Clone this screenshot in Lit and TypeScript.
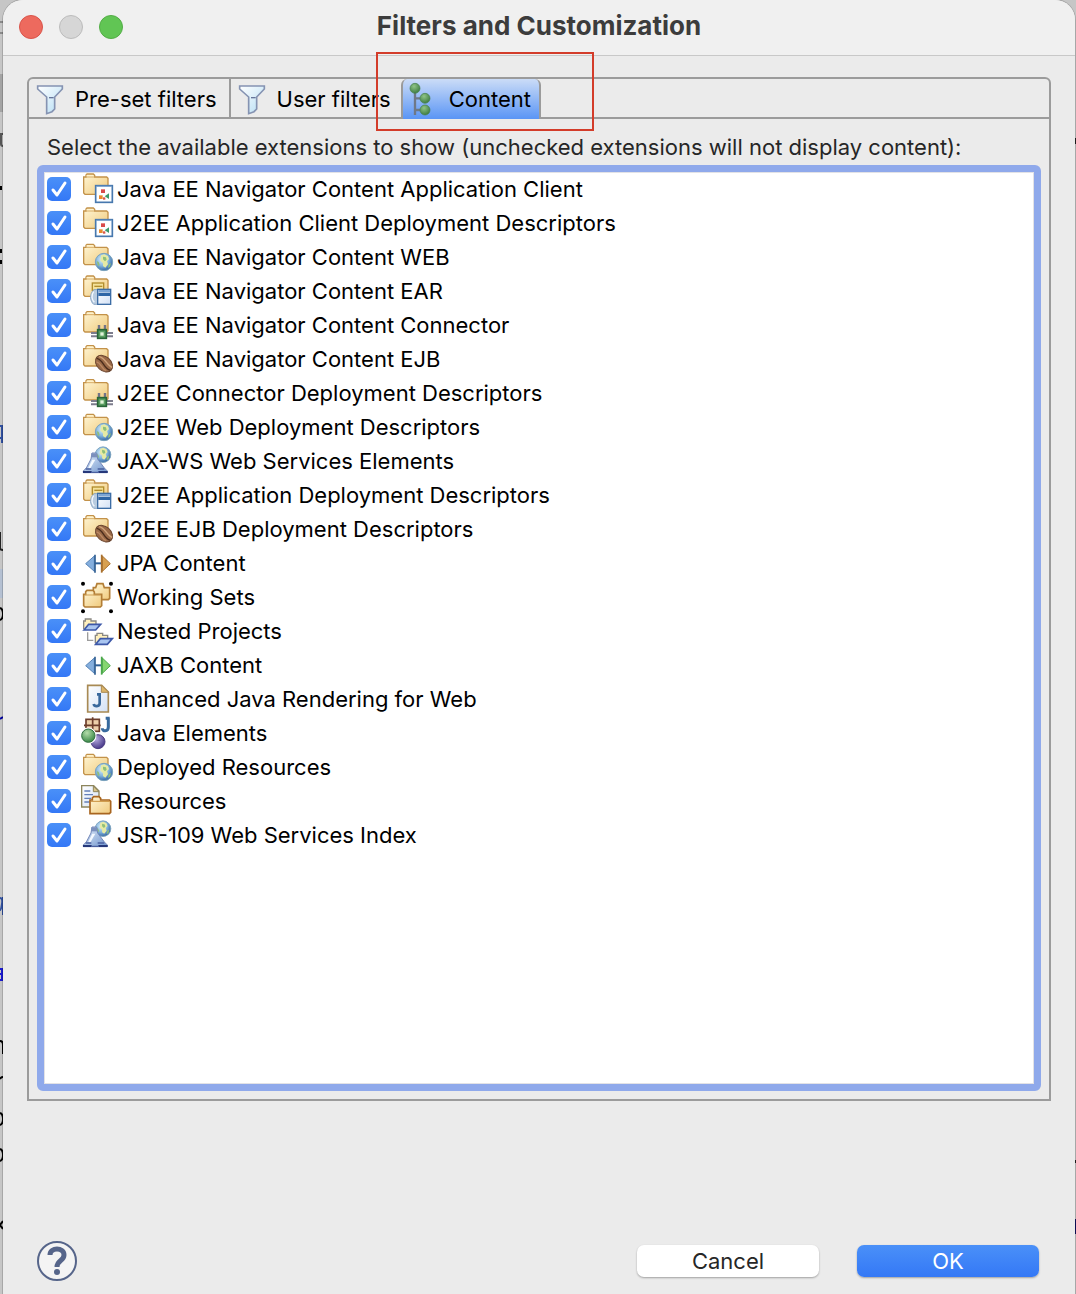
import { LitElement, html, svg, css, TemplateResult } from "lit";
import { customElement, state } from "lit/decorators.js";

type IconName =
  | "client" | "web" | "ear" | "connector" | "ejb" | "service" | "jpa"
  | "sets" | "nested" | "jaxb" | "javafile" | "javaelements" | "resources";

interface Extension {
  name: string;
  icon: IconName;
}

const EXTENSIONS: Extension[] = [
  { name: "Java EE Navigator Content Application Client", icon: "client" },
  { name: "J2EE Application Client Deployment Descriptors", icon: "client" },
  { name: "Java EE Navigator Content WEB", icon: "web" },
  { name: "Java EE Navigator Content EAR", icon: "ear" },
  { name: "Java EE Navigator Content Connector", icon: "connector" },
  { name: "Java EE Navigator Content EJB", icon: "ejb" },
  { name: "J2EE Connector Deployment Descriptors", icon: "connector" },
  { name: "J2EE Web Deployment Descriptors", icon: "web" },
  { name: "JAX-WS Web Services Elements", icon: "service" },
  { name: "J2EE Application Deployment Descriptors", icon: "ear" },
  { name: "J2EE EJB Deployment Descriptors", icon: "ejb" },
  { name: "JPA Content", icon: "jpa" },
  { name: "Working Sets", icon: "sets" },
  { name: "Nested Projects", icon: "nested" },
  { name: "JAXB Content", icon: "jaxb" },
  { name: "Enhanced Java Rendering for Web", icon: "javafile" },
  { name: "Java Elements", icon: "javaelements" },
  { name: "Deployed Resources", icon: "web" },
  { name: "Resources", icon: "resources" },
  { name: "JSR-109 Web Services Index", icon: "service" },
];

// Shared gradients; each icon carries its own copy so ids resolve inside the shadow root.
const defs = svg`<defs>
  <linearGradient id="folder" x1="0" y1="0" x2="1" y2="1"><stop offset="0" stop-color="#fff6d6"/><stop offset="1" stop-color="#f0ca7c"/></linearGradient>
  <linearGradient id="paper" x1="0" y1="0" x2="1" y2="1"><stop offset="0" stop-color="#ffffff"/><stop offset="1" stop-color="#d3e1f5"/></linearGradient>
  <radialGradient id="globe" cx=".4" cy=".35" r=".7"><stop offset="0" stop-color="#e2f3fb"/><stop offset=".55" stop-color="#7fb2dc"/><stop offset="1" stop-color="#2c5c9c"/></radialGradient>
  <radialGradient id="green" cx=".4" cy=".3" r=".7"><stop offset="0" stop-color="#b4dcaa"/><stop offset="1" stop-color="#3c8a48"/></radialGradient>
  <radialGradient id="purple" cx=".35" cy=".3" r=".7"><stop offset="0" stop-color="#b8aee0"/><stop offset="1" stop-color="#4b3c8c"/></radialGradient>
  <linearGradient id="blue" x1="0" y1="0" x2="1" y2="1"><stop offset="0" stop-color="#e4f0fc"/><stop offset="1" stop-color="#6f93cc"/></linearGradient>
</defs>`;

const folder = (dy: number) => svg`<g transform="translate(0 ${dy})">
  <path d="M8 60V12h7V6l3-3h19l4 4v5h36l4 4v44l-4 4H12z" fill="url(#folder)" stroke="#c3924a" stroke-width="4"/>
  <path d="M17 8h20" stroke="#fff3cc" stroke-width="4"/>
  <path d="M15 12h26" stroke="#d8ae68" stroke-width="3"/>
</g>`;

const globe = (cx: number, cy: number, scale = 1) => svg`<g transform="translate(${cx} ${cy}) scale(${scale})">
  <circle r="26" fill="url(#globe)" stroke="#7aa3bd" stroke-width="3"/>
  <path d="M-9-20l10-3 11 5 3 9-6 7 3 9-8 10-7-5v-9l-8-7z" fill="#e6eaa4"/>
  <path d="M-3-16l9 2 2 7-5 5-6-6zM-22-3l6 3 3 9-5 3zM14 8l7-5-3 12-6 3z" fill="#8fc07a"/>
</g>`;

const arrows = (fill: string, edge: string) => svg`
  <path d="M42 49h20" stroke="#2f5f96" stroke-width="6"/>
  <path d="M14 50 40 27v46z" fill="#84aedd" stroke="#5683b7" stroke-width="3"/>
  <path d="M42 23v54" stroke="#315f92" stroke-width="5"/>
  <path d="M88 50 64 27v46z" fill="${fill}" stroke="${edge}" stroke-width="3"/>
  <path d="M62 23v54" stroke="${edge}" stroke-width="5"/>`;

const openFolder = (dx: number, dy: number) => svg`<g transform="translate(${dx} ${dy})">
  <path d="M2 32V8h5V2h17v6h15v9" fill="#fff0bd" stroke="#8b8984" stroke-width="4"/>
  <path d="M3 35 17 18h36L38 35z" fill="#a9c5f0" stroke="#3d58a8" stroke-width="5"/>
</g>`;

const ICONS: Record<IconName, TemplateResult> = {
  client: svg`${folder(0)}
    <rect x="44" y="38" width="50" height="50" fill="#fdfeff" stroke="#4778ae" stroke-width="5"/>
    <path d="M46 40h46" stroke="#7da5d0" stroke-width="3"/>
    <rect x="60" y="49" width="12" height="11" fill="#d94a4a"/>
    <rect x="54" y="67" width="11" height="11" fill="#e88a2e"/>
    <path d="M71 70l13-9v17z" fill="#3c9a6a"/>
    <rect x="66" y="73" width="7" height="7" fill="#d8574a"/>`,
  web: svg`${folder(7)}${globe(69, 63)}`,
  ear: svg`${folder(0)}
    <rect x="34" y="24" width="34" height="22" fill="#f4e19a" stroke="#b28d2c" stroke-width="4"/>
    <path d="M40 34h24" stroke="#b28d2c" stroke-width="4"/>
    <path d="M39 44h13v44H38c-10-8-15-30 1-44z" fill="#b9cce0" stroke="#8fa9c6" stroke-width="3"/>
    <path d="M38 50c-8 10-6 24 2 32" stroke="#f4f9ff" stroke-width="4" fill="none"/>
    <rect x="50" y="43" width="39" height="45" fill="url(#paper)" stroke="#3d6da5" stroke-width="4"/>
    <rect x="52" y="53" width="35" height="10" fill="#2f66a6"/>
    <path d="M52 48h35" stroke="#7da5d4" stroke-width="6"/>`,
  connector: svg`${folder(5)}
    <path d="M54 48v20M72 48v20" stroke="#5c5c70" stroke-width="7"/>
    <path d="M54 48v20M72 48v20" stroke="#a8a8ba" stroke-width="2"/>
    <path d="M30 72h66M30 82h66" stroke="#7c7c8c" stroke-width="6"/>
    <rect x="50" y="62" width="26" height="26" fill="#5ba063" stroke="#286538" stroke-width="5"/>
    <rect x="58" y="70" width="10" height="10" fill="#e2f4da"/>`,
  ejb: svg`${folder(5)}
    <g transform="translate(69 62) rotate(42)">
      <ellipse rx="29" ry="21" fill="#9a6a48" stroke="#6b4630" stroke-width="3"/>
      <path d="M-25-6C-12-16 10-2 26-8" stroke="#d0a47c" stroke-width="4" fill="none"/>
      <path d="M-27 3C-8-8 8 12 27 2" stroke="#4a2c1c" stroke-width="4" fill="none"/>
      <path d="M-20 11C-6 4 6 18 19 11" stroke="#bd8a64" stroke-width="4" fill="none"/>
    </g>`,
  service: svg`${globe(66, 29, 0.9)}
    <path d="M33 24h14l3 18 20 27 9 9v5H7v-5l9-9 14-27z" fill="url(#blue)" stroke="#7387b8" stroke-width="3"/>
    <path d="M31 25h17v12H31z" fill="#7b90bd"/>
    <path d="M22 68 34 44h9L27 72z" fill="#f4f9ff"/>
    <path d="M6 81h26M52 81h28" stroke="#26387a" stroke-width="6"/>
    <path d="M14 72h17M50 72h20M30 82h24" stroke="#4a60a0" stroke-width="4"/>`,
  jpa: arrows("#d8a050", "#a9702c"),
  jaxb: arrows("#86d670", "#4aa74a"),
  sets: svg`
    <path d="M37 54V20h7l4-12h18l4 12h16v32l-4 4H37z" fill="url(#folder)" stroke="#b37e36" stroke-width="5"/>
    <path d="M8 74V40h6v-8l4-4h18l4 5v7h22v34l-4 4H12z" fill="url(#folder)" stroke="#b37e36" stroke-width="5"/>
    <path d="M11 42h48" stroke="#cfa158" stroke-width="3"/>
    <circle cx="6" cy="8" r="6"/><circle cx="90" cy="8" r="6"/>
    <circle cx="6" cy="91" r="6"/><circle cx="90" cy="91" r="6"/>`,
  nested: svg`${openFolder(6, 10)}
    <path d="M20 52v24h17" stroke="#9c9c9c" stroke-width="4" fill="none"/>
    ${openFolder(41, 53)}`,
  javafile: svg`
    <path d="M20 7h42l20 20v60H20z" fill="url(#paper)" stroke="#a88a54" stroke-width="5"/>
    <path d="M61 6v22h22z" fill="#dcb468" stroke="#a88a54" stroke-width="3"/>
    <path d="M56 33v28c0 11-16 11-18 2M48 34h12" stroke="#3a699c" stroke-width="8" fill="none"/>`,
  javaelements: svg`
    <rect x="15" y="7" width="40" height="36" fill="#edd0aa" stroke="#6c3e2c" stroke-width="5"/>
    <path d="M35 1v46M9 25h50" stroke="#6c3e2c" stroke-width="5"/>
    <path d="M82 2v28c0 15-18 14-18 4M74 4h12" stroke="#386a9e" stroke-width="9" fill="none"/>
    <circle cx="51" cy="74" r="21" fill="url(#purple)" stroke="#4a3c80" stroke-width="3"/>
    <circle cx="22" cy="56" r="21" fill="url(#green)" stroke="#fff" stroke-width="7"/>
    <circle cx="22" cy="56" r="20" fill="url(#green)" stroke="#2f6e40" stroke-width="3"/>`,
  resources: svg`
    <path d="M2 2h36l16 16v48H2z" fill="url(#paper)" stroke="#8d855c" stroke-width="4"/>
    <path d="M37 3v17h17z" fill="#d9c48a" stroke="#8d855c" stroke-width="3"/>
    <path d="M10 18h18M10 29h26M10 40h20M10 51h18" stroke="#6480b8" stroke-width="4"/>
    <path d="M27 86V45h7v-6l4-4h16l5 5v5h26l4 4v33l-4 4z" fill="url(#folder)" stroke="#a8651f" stroke-width="5"/>
    <path d="M30 49h56" stroke="#c8903c" stroke-width="3"/>`,
};

const funnel = svg`<defs><linearGradient id="f" x1="0" y1="0" x2="1" y2="1"><stop offset="0" stop-color="#ffffff"/><stop offset="1" stop-color="#b4ddf4"/></linearGradient></defs>
  <path d="M8 9h74v9L59 42v36l-8 8-16 6V42L8 18z" fill="url(#f)" stroke="#8593b2" stroke-width="5"/>
  <path d="M42 44h14" stroke="#66759a" stroke-width="4"/>`;

const tree = svg`<defs><radialGradient id="g" cx=".4" cy=".3" r=".7"><stop offset="0" stop-color="#8fc487"/><stop offset="1" stop-color="#3f7d41"/></radialGradient></defs>
  <path d="M18 30v66M18 46h16M18 81h16" stroke="#6f7887" stroke-width="7" fill="none"/>
  <circle cx="18" cy="16" r="15" fill="url(#g)" stroke="#467f4c" stroke-width="2"/>
  <circle cx="48" cy="46" r="15" fill="url(#g)" stroke="#467f4c" stroke-width="2"/>
  <circle cx="48" cy="81" r="15" fill="url(#g)" stroke="#467f4c" stroke-width="2"/>`;

const TABS = [
  { label: "Pre-set filters", icon: funnel },
  { label: "User filters", icon: funnel },
  { label: "Content", icon: tree },
];

// Slivers of the window behind, seen past the left and right edges of the dialog.
const leftEdge = svg`
  <path d="M0 74h3v38H0z" fill="#a4a4a4"/>
  <path d="M0 569h3v29H0z" fill="#b4c0d2"/>
  <g fill="none" stroke-width="2">
    <path d="M0 22h3M0 33h3" stroke="#8a8a8a"/>
    <path d="M0 134h3M1 134v10q0 2 2 2" stroke="#555"/>
    <path d="M0 188h2M0 251h2M0 262h2" stroke="#000" stroke-width="4"/>
    <path d="M0 426h3M0 438h3M2 425v18" stroke="#3050a0"/>
    <path d="M0 532v16q0 2 3 2" stroke="#222"/>
    <path d="M0 608q3 1 3 6t-3 6" stroke="#000"/>
    <path d="M0 719l3-2" stroke="#0000a0"/>
    <path d="M0 898q3 0 2 6t-2 6M3 897v18" stroke="#3050a0"/>
    <path d="M0 969h2v12M0 974h3M0 980h3" stroke="#1a1ad0"/>
    <path d="M0 1041q3 0 3 4v9M0 1079q1-2 3-2" stroke="#000"/>
    <path d="M0 1113q3 1 3 6t-3 6M0 1149q3 1 3 6t-3 6" stroke="#000"/>
    <path d="M3 1221l-3 4 3 4" stroke="#000"/>
  </g>`;
const rightEdge = svg`<path d="M0 138h1v6H0zM0 1160h1v3H0z" fill="#222"/><path d="M0 1219h1v15H0z" fill="#101060"/>`;

@customElement("extension-row")
class ExtensionRow extends LitElement {
  static properties = { name: {}, icon: {} };
  declare name: string;
  declare icon: IconName;

  static styles = css`
    :host { display: block; }
    .row { display: flex; align-items: center; height: 34px; }
    .box { display: grid; width: 24px; height: 24px; margin-right: 10px; }
    .box > * { grid-area: 1 / 1; }
    .tick {
      appearance: none; margin: 0; width: 24px; height: 24px; border-radius: 5px;
      background: #fff; border: 1px solid #c4c4c4;
    }
    .tick:checked { border: 0; background: linear-gradient(#4a90f8, #3478f6); }
    .mark { width: 24px; height: 24px; pointer-events: none; visibility: hidden; }
    .tick:checked + .mark { visibility: visible; }
    .icon { width: 32px; height: 32px; margin-right: 4px; overflow: visible; }
    .name { white-space: nowrap; }
  `;

  render() {
    return html`<label class="row">
      <span class="box">
        <input class="tick" type="checkbox" checked />
        <svg class="mark" viewBox="0 0 24 24" aria-hidden="true">
          <path d="M6 13l4 5 8-12" fill="none" stroke="#fff" stroke-width="3" stroke-linecap="round" stroke-linejoin="round"/>
        </svg>
      </span>
      <svg class="icon" viewBox="0 0 96 96" aria-hidden="true">${defs}${ICONS[this.icon]}</svg>
      <span class="name">${this.name}</span>
    </label>`;
  }
}

@customElement("app-root")
class AppRoot extends LitElement {
  @state() private active = 2;

  static styles = css`
    :host {
      display: block; position: relative; box-sizing: border-box; min-height: 100vh; padding: 0 1px 0 3px;
      background: #c6c6c6; color: #000;
      font-family: Inter, "Liberation Sans", sans-serif; font-size: 22px; line-height: 28px;
    }
    * { box-sizing: border-box; }
    button { font: inherit; color: inherit; border: 0; }
    .behind { position: absolute; top: 0; left: 0; width: 3px; height: 100%; }
    .behind.right { left: auto; right: 0; width: 1px; }
    .dialog {
      position: relative; display: flex; flex-direction: column; min-height: 100vh;
      background: #ebebeb; border-radius: 20px 20px 0 0; box-shadow: 0 0 0 1px #00000028;
    }
    .titlebar {
      display: grid; grid-template-columns: 1fr auto 1fr; align-items: center; height: 56px;
      padding: 0 16px 2px; background: #f0f0f0; border-bottom: 1px solid #c8c8c8;
      border-radius: 20px 20px 0 0;
    }
    .lights { display: flex; gap: 16px; }
    .light { width: 24px; height: 24px; padding: 0; border-radius: 50%; border: 1px solid #d9544a; background: #ed6a5e; }
    .light.min { background: #d6d6d6; border-color: #bcbcbc; }
    .light.max { background: #61c554; border-color: #53ad46; }
    .title { margin: 0; padding-bottom: 2px; font-size: 26px; line-height: 32px; font-weight: 700; color: #3c3c3c; }
    .tabfolder {
      flex: 1; display: flex; flex-direction: column; margin: 21px 24px 0;
      border: 2px solid #9b9b9b; border-radius: 6px 6px 0 0;
    }
    .tabs { display: flex; height: 40px; border-bottom: 2px solid #9b9b9b; }
    .tab {
      position: relative; display: flex; align-items: center; gap: 8px; height: 38px;
      padding: 2px 12px 0 6px; background: none; border-right: 2px solid #9b9b9b; white-space: nowrap;
    }
    .tab:has(+ .active) { border-right: 0; padding-right: 10px; }
    .tab.active {
      height: 40px; padding: 2px 8px 2px 6px; border: 2px solid #9b9b9b; border-width: 0 2px;
      border-radius: 6px 6px 0 0; background: linear-gradient(#cbdcf7, #5a95f5);
    }
    .tabicon { width: 32px; height: 32px; overflow: visible; }
    .callout {
      position: absolute; left: -27px; top: -27px; width: 218px; height: 79px;
      border: 2px solid #d33c2a; pointer-events: none;
    }
    .panel { flex: 1; display: flex; flex-direction: column; padding: 14px 8px 8px; }
    .prompt { margin: 0 0 4px; padding-left: 10px; color: #262626; white-space: nowrap; }
    .list {
      flex: 1; margin: 0; padding: 0 3px; list-style: none; background: #fff;
      border: 7px solid #8fa9eb; border-radius: 6px; box-shadow: inset 0 0 0 1px #e2e2e6;
    }
    .footer { display: flex; align-items: center; gap: 38px; padding: 140px 36px 13px 34px; }
    .help { width: 40px; height: 40px; padding: 0; margin-right: auto; background: none; border-radius: 50%; }
    .helpicon { display: block; width: 40px; height: 40px; }
    .action {
      width: 182px; height: 32px; padding: 0; border-radius: 7px; background: #fff; color: #262626;
      line-height: 32px; box-shadow: 0 1px 2px #00000050;
    }
    .action.primary { background: linear-gradient(#4a90f8, #3478f6); color: #fff; }
  `;

  render() {
    return html`
    <svg class="behind" aria-hidden="true">${leftEdge}</svg>
    <svg class="behind right" aria-hidden="true">${rightEdge}</svg>
    <main class="dialog">
      <header class="titlebar">
        <div class="lights">
          <button class="light" aria-label="Close"></button>
          <button class="light min" aria-label="Minimize" disabled></button>
          <button class="light max" aria-label="Zoom"></button>
        </div>
        <h1 class="title">Filters and Customization</h1>
      </header>
      <section class="tabfolder">
        <div class="tabs" role="tablist">
          ${TABS.map((tab, i) => html`<button
            class="tab ${i === this.active ? "active" : ""}" role="tab"
            aria-selected=${i === this.active} @click=${() => (this.active = i)}>
            <svg class="tabicon" viewBox="0 0 96 96" aria-hidden="true">${tab.icon}</svg>
            <span>${tab.label}</span>
            ${i === 2 ? html`<span class="callout"></span>` : ""}
          </button>`)}
        </div>
        <div class="panel" role="tabpanel">
          <p class="prompt" id="prompt">Select the available extensions to show (unchecked extensions will not display content):</p>
          <ul class="list" aria-labelledby="prompt">
            ${EXTENSIONS.map((e) => html`<li><extension-row .name=${e.name} .icon=${e.icon}></extension-row></li>`)}
          </ul>
        </div>
      </section>
      <footer class="footer">
        <button class="help" aria-label="Help">
          <svg class="helpicon" viewBox="0 0 40 40" aria-hidden="true">
            <circle cx="20" cy="20" r="19" fill="#f4f4f4" stroke="#56658a" stroke-width="2"/>
            <path d="M13 14c0-8 14-8 14 0 0 6-7 5-7 12" fill="none" stroke="#56658a" stroke-width="5"/>
            <circle cx="20" cy="31" r="3" fill="#56658a"/>
          </svg>
        </button>
        <button class="action">Cancel</button>
        <button class="action primary">OK</button>
      </footer>
    </main>`;
  }
}
